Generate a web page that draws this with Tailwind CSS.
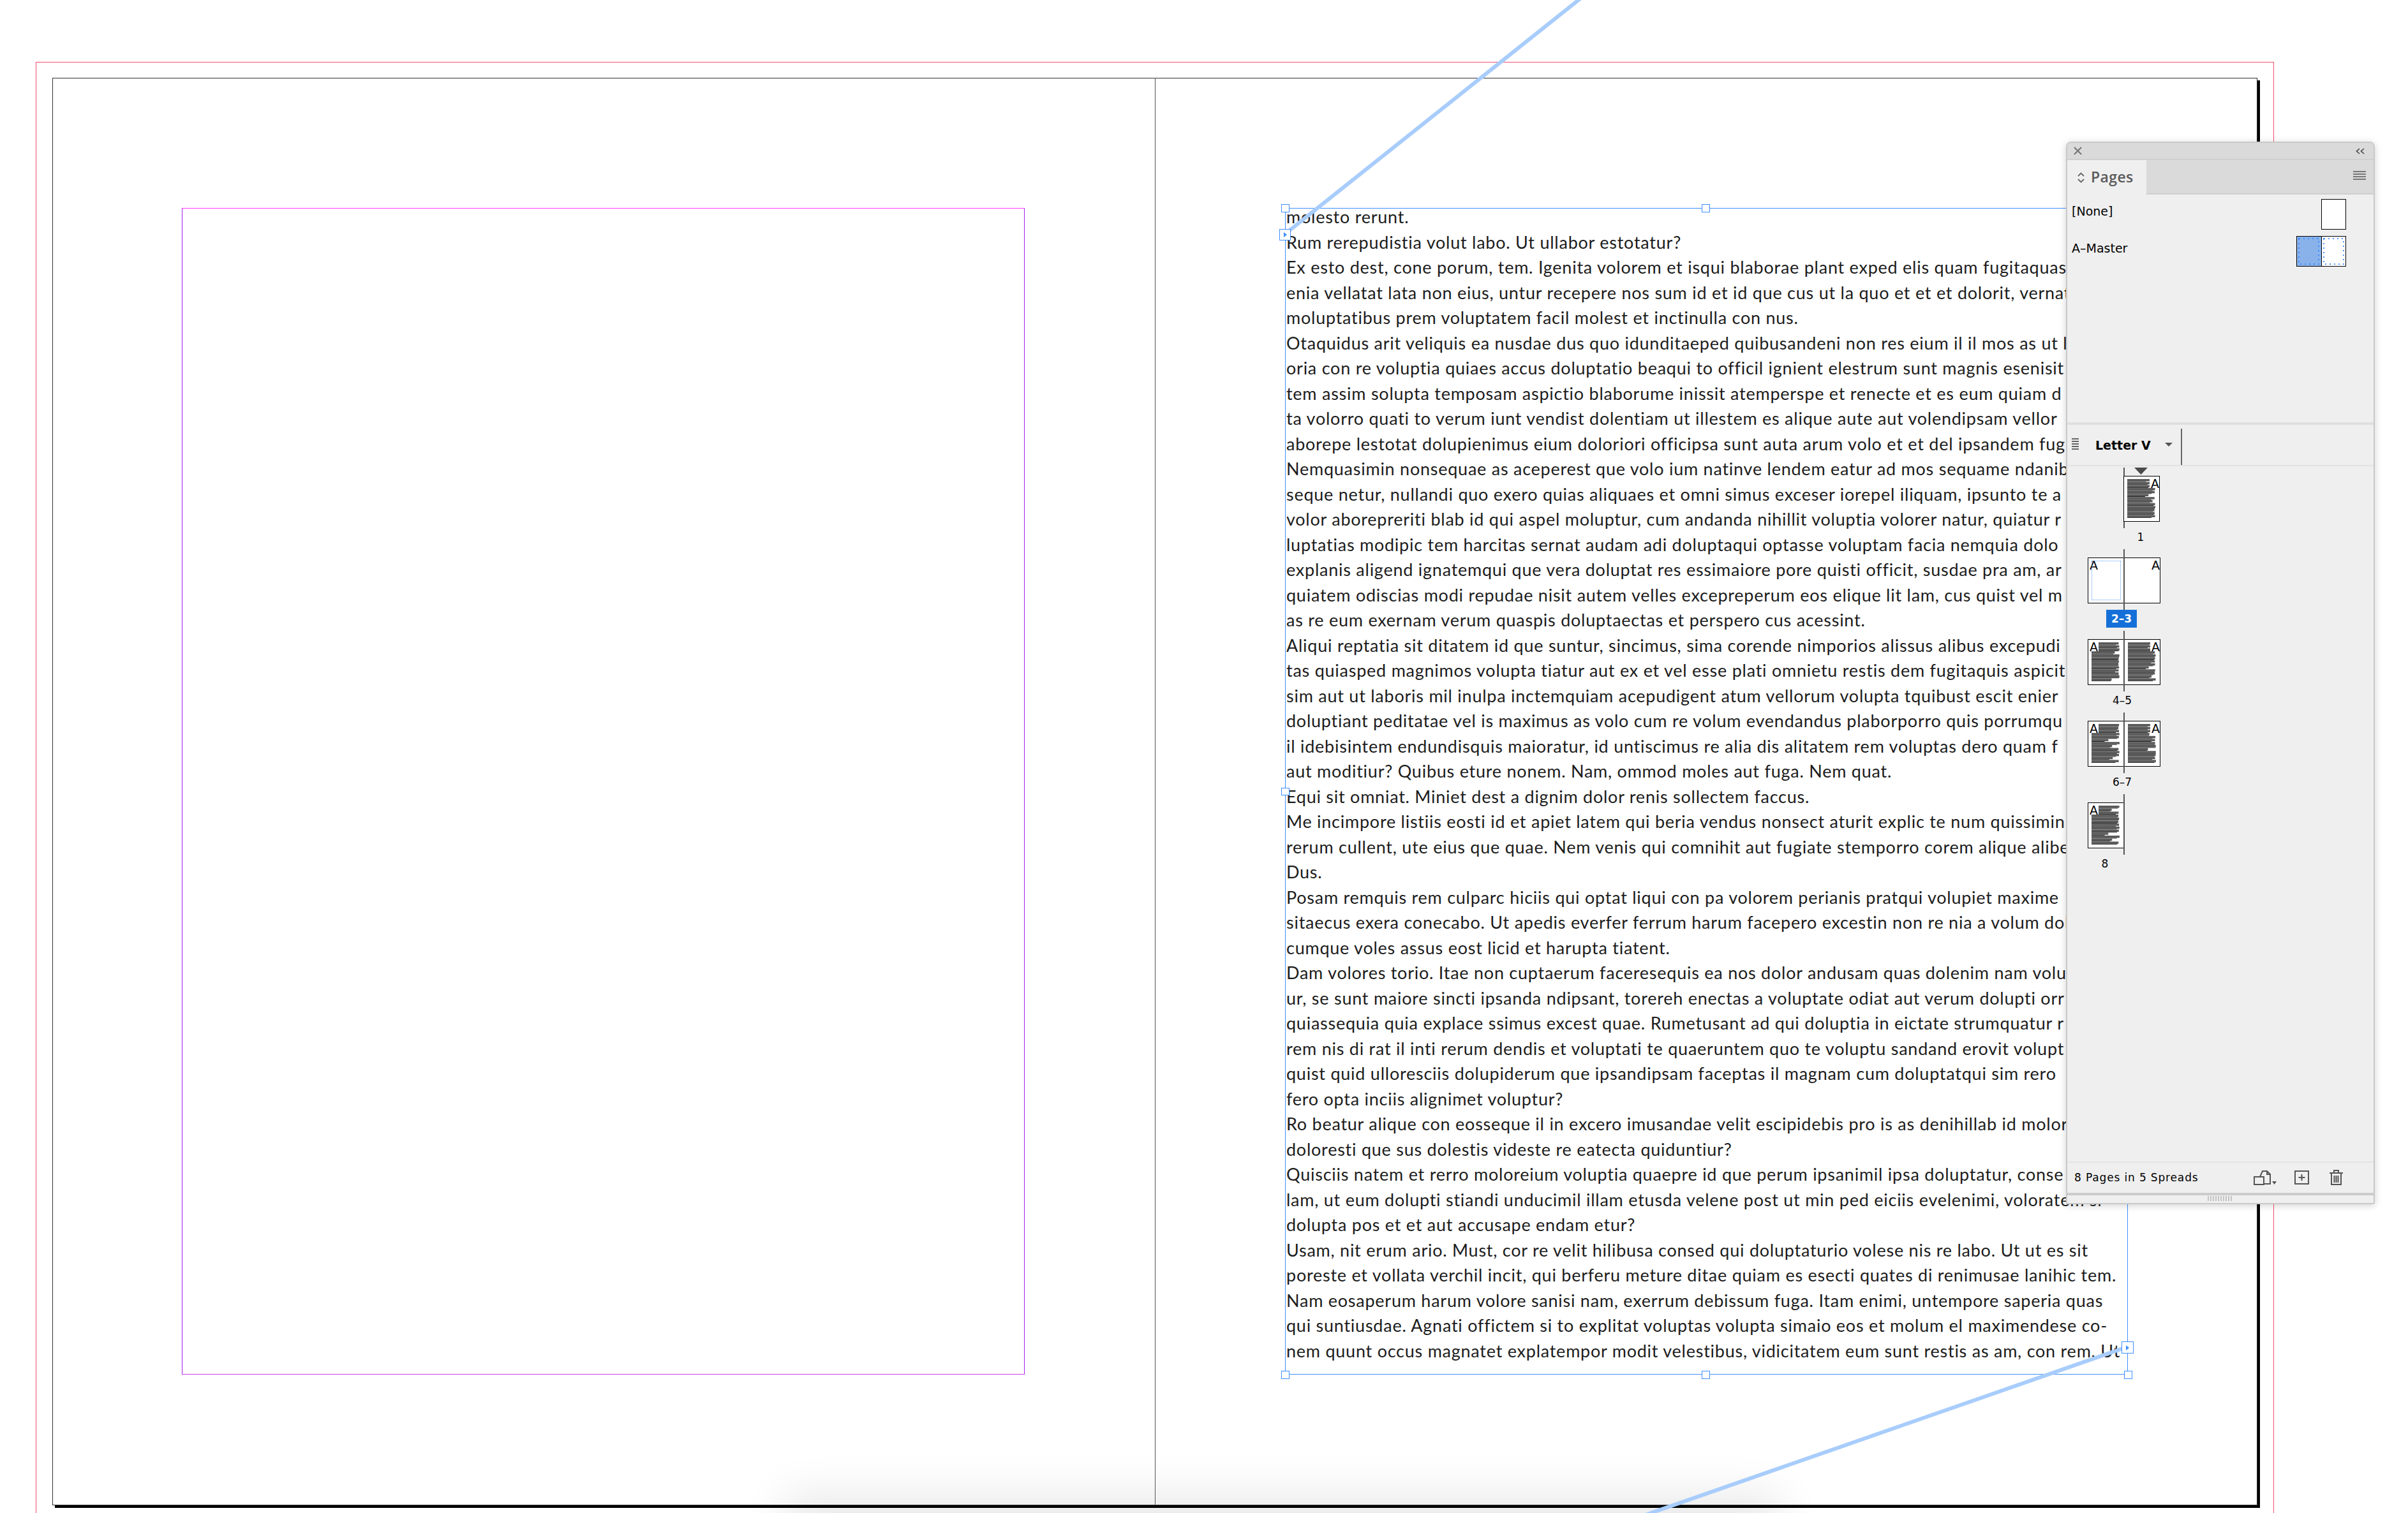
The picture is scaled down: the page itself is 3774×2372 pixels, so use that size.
<!DOCTYPE html>
<html lang="en">
<head>
    <meta charset="UTF-8">
    <title>Pages panel</title>
    <script src="https://cdn.jsdelivr.net/npm/@tailwindcss/browser@4"></script>
</head>
<body class="bg-white">
<div class="relative w-[3774px] h-[2372px] overflow-hidden bg-white">

    <!-- shadow under the document window -->
    <div class="absolute left-[1260px] top-[2372px] w-[1500px] h-[40px] bg-[#e8e8e8] shadow-[0_0_70px_30px_rgba(0,0,0,0.09)]"></div>

    <!-- bleed -->
    <div class="absolute left-[56px] top-[97px] w-[3508px] h-[2400px] border border-[#f4506e]"></div>

    <!-- spread -->
    <div class="absolute left-[82px] top-[122px] w-[3456px] h-[2238px] border border-[#333333] shadow-[4px_4px_0_0_#000000]"></div>
    <div class="absolute left-[1810px] top-[122px] w-[1px] h-[2238px] bg-[#555555]"></div>

    <!-- left page margins -->
    <div class="absolute left-[285px] top-[326px] w-[1321px] h-[1829px] border border-[#ff3cff] border-l-[#a020f0] border-r-[#a020f0] border-b-[#d03cf5]"></div>

    <!-- text frame -->
    <div class="absolute left-[2014px] top-[326px] w-[1321px] h-[1829px] border border-[#3f8fff]">
        <div class="-mt-[7px] pl-[1px] font-['Lato',sans-serif] text-[27px] tracking-[0.75px] leading-[39.5px] text-[#1c1c1c] whitespace-nowrap">
            <div>molesto rerunt.</div>
            <div>Rum rerepudistia volut labo. Ut ullabor estotatur?</div>
            <div>Ex esto dest, cone porum, tem. Igenita volorem et isqui blaborae plant exped elis quam fugitaquas</div>
            <div>enia vellatat lata non eius, untur recepere nos sum id et id que cus ut la quo et et et dolorit, vernati</div>
            <div>moluptatibus prem voluptatem facil molest et inctinulla con nus.</div>
            <div>Otaquidus arit veliquis ea nusdae dus quo idunditaeped quibusandeni non res eium il il mos as ut l</div>
            <div>oria con re voluptia quiaes accus doluptatio beaqui to officil ignient elestrum sunt magnis esenisit</div>
            <div>tem assim solupta temposam aspictio blaborume inissit atemperspe et renecte et es eum quiam d</div>
            <div>ta volorro quati to verum iunt vendist dolentiam ut illestem es alique aute aut volendipsam vellor</div>
            <div>aborepe lestotat dolupienimus eium doloriori officipsa sunt auta arum volo et et del ipsandem fug</div>
            <div>Nemquasimin nonsequae as aceperest que volo ium natinve lendem eatur ad mos sequame ndanib</div>
            <div>seque netur, nullandi quo exero quias aliquaes et omni simus exceser iorepel iliquam, ipsunto te a</div>
            <div>volor aborepreriti blab id qui aspel moluptur, cum andanda nihillit voluptia volorer natur, quiatur r</div>
            <div>luptatias modipic tem harcitas sernat audam adi doluptaqui optasse voluptam facia nemquia dolo</div>
            <div>explanis aligend ignatemqui que vera doluptat res essimaiore pore quisti officit, susdae pra am, ar</div>
            <div>quiatem odiscias modi repudae nisit autem velles excepreperum eos elique lit lam, cus quist vel m</div>
            <div>as re eum exernam verum quaspis doluptaectas et perspero cus acessint.</div>
            <div>Aliqui reptatia sit ditatem id que suntur, sincimus, sima corende nimporios alissus alibus excepudi</div>
            <div>tas quiasped magnimos volupta tiatur aut ex et vel esse plati omnietu restis dem fugitaquis aspicit</div>
            <div>sim aut ut laboris mil inulpa inctemquiam acepudigent atum vellorum volupta tquibust escit enier</div>
            <div>doluptiant peditatae vel is maximus as volo cum re volum evendandus plaborporro quis porrumqu</div>
            <div>il idebisintem endundisquis maioratur, id untiscimus re alia dis alitatem rem voluptas dero quam f</div>
            <div>aut moditiur? Quibus eture nonem. Nam, ommod moles aut fuga. Nem quat.</div>
            <div>Equi sit omniat. Miniet dest a dignim dolor renis sollectem faccus.</div>
            <div>Me incimpore listiis eosti id et apiet latem qui beria vendus nonsect aturit explic te num quissimin</div>
            <div>rerum cullent, ute eius que quae. Nem venis qui comnihit aut fugiate stemporro corem alique alibe</div>
            <div>Dus.</div>
            <div>Posam remquis rem culparc hiciis qui optat liqui con pa volorem perianis pratqui volupiet maxime</div>
            <div>sitaecus exera conecabo. Ut apedis everfer ferrum harum facepero excestin non re nia a volum dol</div>
            <div>cumque voles assus eost licid et harupta tiatent.</div>
            <div>Dam volores torio. Itae non cuptaerum faceresequis ea nos dolor andusam quas dolenim nam volu</div>
            <div>ur, se sunt maiore sincti ipsanda ndipsant, torereh enectas a voluptate odiat aut verum dolupti orr</div>
            <div>quiassequia quia explace ssimus excest quae. Rumetusant ad qui doluptia in eictate strumquatur r</div>
            <div>rem nis di rat il inti rerum dendis et voluptati te quaeruntem quo te voluptu sandand erovit volupt</div>
            <div>quist quid ulloresciis dolupiderum que ipsandipsam faceptas il magnam cum doluptatqui sim rero</div>
            <div>fero opta inciis alignimet voluptur?</div>
            <div>Ro beatur alique con eosseque il in excero imusandae velit escipidebis pro is as denihillab id molor</div>
            <div>doloresti que sus dolestis videste re eatecta quiduntiur?</div>
            <div>Quisciis natem et rerro moloreium voluptia quaepre id que perum ipsanimil ipsa doluptatur, conse</div>
            <div>lam, ut eum dolupti stiandi unducimil illam etusda velene post ut min ped eiciis evelenimi, voloratem si</div>
            <div>dolupta pos et et aut accusape endam etur?</div>
            <div>Usam, nit erum ario. Must, cor re velit hilibusa consed qui doluptaturio volese nis re labo. Ut ut es sit</div>
            <div>poreste et vollata verchil incit, qui berferu meture ditae quiam es esecti quates di renimusae lanihic tem.</div>
            <div>Nam eosaperum harum volore sanisi nam, exerrum debissum fuga. Itam enimi, untempore saperia quas</div>
            <div>qui suntiusdae. Agnati offictem si to explitat voluptas volupta simaio eos et molum el maximendese co-</div>
            <div>nem quunt occus magnatet explatempor modit velestibus, vidicitatem eum sunt restis as am, con rem. Ut</div>
        </div>
    </div>

    <!-- thread lines -->
    <svg class="absolute left-0 top-0" width="3774" height="2372" fill="none" stroke="#a8cdfc" stroke-width="6">
        <path d="M2020 362L2479 -4"/>
        <path d="M3327 2114L2576 2376"/>
    </svg>

    <!-- frame handles -->
    <div class="absolute left-[2008px] top-[320px] w-[13px] h-[13px] bg-white border border-[#3f8fff]"></div>
    <div class="absolute left-[2667px] top-[320px] w-[13px] h-[13px] bg-white border border-[#3f8fff]"></div>
    <div class="absolute left-[2008px] top-[1235px] w-[13px] h-[12px] bg-white border border-[#3f8fff]"></div>
    <div class="absolute left-[2008px] top-[2149px] w-[13px] h-[13px] bg-white border border-[#3f8fff]"></div>
    <div class="absolute left-[2667px] top-[2149px] w-[13px] h-[13px] bg-white border border-[#3f8fff]"></div>
    <div class="absolute left-[3329px] top-[2149px] w-[13px] h-[13px] bg-white border border-[#3f8fff]"></div>
    <!-- in and out ports -->
    <div class="absolute left-[2005px] top-[359px] w-[18px] h-[18px] bg-white border border-[#3f8fff] flex items-center justify-center">
        <svg width="5" height="8"><path d="M0 0L5 4L0 8Z" fill="#3f8fff"/></svg>
    </div>
    <div class="absolute left-[3325px] top-[2103px] w-[19px] h-[19px] bg-white border border-[#3f8fff] flex items-center justify-center">
        <svg width="5" height="8"><path d="M0 0L5 4L0 8Z" fill="#3f8fff"/></svg>
    </div>

    <!-- pages panel -->
    <div class="absolute left-[3238px] top-[222px] w-[484px] h-[1666px] flex flex-col bg-[#efefef] border-2 border-[#c9c9c9] rounded-t-[8px] rounded-b-[2px] shadow-[0_2px_12px_rgba(0,0,0,0.18)] font-['DejaVu_Sans',sans-serif] text-black">

        <div class="h-[25px] shrink-0 bg-[#dadada] rounded-t-[6px] flex items-center justify-between pl-[10px] pr-[14px] border-b-2 border-[#cfcfcf] box-content">
            <svg width="13" height="13" fill="none" stroke="#777777" stroke-width="2.2"><path d="M1 1L12 12M12 1L1 12"/></svg>
            <svg width="14" height="10" fill="none" stroke="#444444" stroke-width="1.6"><path d="M6 1L1.500 5L6 9M13 1L8.500 5L13 9"/></svg>
        </div>

        <div class="h-[54px] shrink-0 flex bg-[#dadada]">
            <div class="w-[124px] h-full bg-[#efefef] flex items-center pl-[16px] gap-[10px]">
                <svg width="11" height="17" fill="none" stroke="#666666" stroke-width="1.8"><path d="M1 6L5.500 1.500L10 6M1 11L5.500 15.500L10 11"/></svg>
                <span class="font-['Open_Sans',sans-serif] font-semibold text-[23px] tracking-[0.4px] text-[#5a5a5a] -mt-[2px]">Pages</span>
            </div>
            <div class="flex-1 border-b-2 border-[#cfcfcf] flex items-center justify-end pr-[12px]">
                <div class="w-[20px] h-[14px] flex flex-col justify-between -mt-[4px]">
                    <div class="h-[2px] bg-[#777777]"></div>
                    <div class="h-[2px] bg-[#777777]"></div>
                    <div class="h-[2px] bg-[#777777]"></div>
                    <div class="h-[2px] bg-[#777777]"></div>
                </div>
            </div>
        </div>

        <!-- masters -->
        <div class="h-[357px] shrink-0 relative border-b-4 border-[#dfdfdf] box-content pr-[43px] pl-[7px] text-[19px]">
            <div class="flex justify-between pt-[7px] h-[65px]">
                <span class="mt-[5px]">[None]</span>
                <div class="w-[39px] h-[48px] bg-white border border-black"></div>
            </div>
            <div class="flex justify-between h-[48px]">
                <span class="mt-[5px]">A–Master</span>
                <div class="flex">
                    <div class="w-[39px] h-[48px] border border-black border-r-0 bg-[#8ab2ea]">
                        <svg width="38" height="46" fill="none" stroke="#3d8bff" stroke-width="2" stroke-dasharray="2 5"><rect x="3" y="3" width="31" height="40"/></svg>
                    </div>
                    <div class="w-[39px] h-[48px] border border-black bg-white">
                        <svg width="37" height="46" fill="none" stroke="#4e97ff" stroke-width="2" stroke-dasharray="2 5"><rect x="3" y="3" width="31" height="40"/></svg>
                    </div>
                </div>
            </div>
        </div>

        <!-- page size toolbar -->
        <div class="h-[63px] shrink-0 border-b-2 border-[#e3e3e3] box-content flex items-start pl-[7px]">
            <div class="w-[11px] h-[18px] mt-[21px] flex flex-col justify-between">
                <div class="h-[2px] bg-[#666666]"></div>
                <div class="h-[2px] bg-[#666666]"></div>
                <div class="h-[2px] bg-[#666666]"></div>
                <div class="h-[2px] bg-[#666666]"></div>
                <div class="h-[2px] bg-[#666666]"></div>
            </div>
            <span class="ml-[26px] mt-[18px] w-[109px] text-[19px] font-bold">Letter V</span>
            <svg class="mt-[28px]" width="12" height="6"><path d="M0 0H12L6 6Z" fill="#555555"/></svg>
            <div class="ml-[13px] mt-[6px] w-[2px] h-[57px] bg-[#666666]"></div>
        </div>

        <!-- page thumbnails -->
        <div class="flex-1 pt-[2px] pl-[32px] text-[17px]">

            <div class="relative h-[128px]">
                <div class="absolute left-[56px] top-0 w-[2px] h-[95px] bg-[#555555]"></div>
                <svg class="absolute left-[73px] top-0" width="21" height="11"><path d="M0 0H21L10.500 11Z" fill="#4a4a4a"/></svg>
                <div class="flex pt-[13px] pl-[56px]">
                    <div class="relative w-[57px] h-[72px] bg-white border border-black overflow-hidden">
                        <svg class="absolute -left-[1px] -top-[1px]" width="57" height="72" data-side="r" data-seed="3"></svg>
                        <span class="absolute right-[0px] top-[1px] text-[19px] leading-[20px]">A</span>
                    </div>
                </div>
                <div class="w-[54px] ml-[56px] mt-[10px] text-center leading-[28px]">1</div>
            </div>

            <div class="relative h-[128px]">
                <div class="flex pt-[13px]">
                    <div class="relative w-[57px] h-[72px] bg-white border border-black overflow-hidden">
                        <span class="absolute left-[2px] top-[1px] text-[19px] leading-[20px]">A</span>
                        <div class="absolute left-[5px] top-[4px] w-[46px] h-[62px] border border-dotted border-[#5a9bf0]"></div>
                    </div>
                    <div class="relative w-[57px] h-[72px] bg-white border border-l-0 border-black overflow-hidden">
                        <span class="absolute right-[0px] top-[1px] text-[19px] leading-[20px]">A</span>
                    </div>
                </div>
                <div class="absolute left-[56px] top-0 w-[2px] h-[95px] bg-[#555555]"></div>
                <div class="absolute left-[29px] top-[95px] w-[48px] h-[28px] bg-[#1470d8] text-white font-bold text-center leading-[28px]">2–3</div>
            </div>

            <div class="relative h-[128px]">
                <div class="flex pt-[13px]">
                    <div class="relative w-[57px] h-[72px] bg-white border border-black overflow-hidden">
                        <svg class="absolute -left-[1px] -top-[1px]" width="57" height="72" data-side="l" data-seed="11"></svg>
                        <span class="absolute left-[2px] top-[1px] text-[19px] leading-[20px]">A</span>
                    </div>
                    <div class="relative w-[57px] h-[72px] bg-white border border-l-0 border-black overflow-hidden">
                        <svg class="absolute left-[0px] -top-[1px]" width="57" height="72" data-side="r" data-seed="27"></svg>
                        <span class="absolute right-[0px] top-[1px] text-[19px] leading-[20px]">A</span>
                    </div>
                </div>
                <div class="absolute left-[56px] top-0 w-[2px] h-[95px] bg-[#555555]"></div>
                <div class="mt-[10px] w-[112px] text-center leading-[28px] -ml-[2px]">4–5</div>
            </div>

            <div class="relative h-[128px]">
                <div class="flex pt-[13px]">
                    <div class="relative w-[57px] h-[72px] bg-white border border-black overflow-hidden">
                        <svg class="absolute -left-[1px] -top-[1px]" width="57" height="72" data-side="l" data-seed="41"></svg>
                        <span class="absolute left-[2px] top-[1px] text-[19px] leading-[20px]">A</span>
                    </div>
                    <div class="relative w-[57px] h-[72px] bg-white border border-l-0 border-black overflow-hidden">
                        <svg class="absolute left-[0px] -top-[1px]" width="57" height="72" data-side="r" data-seed="58"></svg>
                        <span class="absolute right-[0px] top-[1px] text-[19px] leading-[20px]">A</span>
                    </div>
                </div>
                <div class="absolute left-[56px] top-0 w-[2px] h-[95px] bg-[#555555]"></div>
                <div class="mt-[10px] w-[112px] text-center leading-[28px] -ml-[2px]">6–7</div>
            </div>

            <div class="relative h-[128px]">
                <div class="flex pt-[13px]">
                    <div class="relative w-[57px] h-[72px] bg-white border border-black overflow-hidden">
                        <svg class="absolute -left-[1px] -top-[1px]" width="57" height="72" data-side="l" data-seed="73"></svg>
                        <span class="absolute left-[2px] top-[1px] text-[19px] leading-[20px]">A</span>
                    </div>
                </div>
                <div class="absolute left-[56px] top-0 w-[2px] h-[95px] bg-[#555555]"></div>
                <div class="mt-[10px] w-[54px] text-center leading-[28px]">8</div>
            </div>
        </div>

        <!-- footer -->
        <div class="h-[49px] shrink-0 border-t-2 border-[#e3e3e3] flex items-center pl-[11px] relative text-[17px] tracking-[0.85px]">
            <span>8 Pages in 5 Spreads</span>
            <svg class="absolute left-[292px] top-[12px]" width="37" height="23" fill="none" stroke="#555555" stroke-width="2">
                <path d="M1 10H16V22H1ZM10 10L14 1H21L26 6V21H16"/><path d="M21 1V6H26"/>
                <path d="M29 17H36L32.500 22Z" fill="#555555" stroke="none"/>
            </svg>
            <svg class="absolute left-[356px] top-[12px]" width="23" height="22" fill="none" stroke="#555555" stroke-width="2">
                <path d="M1 1H22V21H1ZM11.500 6V16M6.500 11H16.500"/>
            </svg>
            <svg class="absolute left-[410px] top-[10px]" width="23" height="25" fill="none" stroke="#555555" stroke-width="2">
                <path d="M1 6H22M4 6V24H19V6M8 6V2H15V6M8.500 10V21M11.500 10V21M14.500 10V21"/>
            </svg>
        </div>

        <!-- resize bar -->
        <div class="h-[16px] shrink-0 border-t-4 border-[#cccccc] flex justify-center pt-[1px]">
            <div class="w-[40px] h-[8px] bg-[repeating-linear-gradient(90deg,#c4c4c4_0_2px,transparent_2px_4px)]"></div>
        </div>
    </div>
</div>

<script>
    // fake text rows for the page thumbnails
    document.querySelectorAll('svg[data-side]').forEach(svg => {
        let seed = Number(svg.dataset.seed);
        const left = svg.dataset.side === 'l';
        const next = () => (seed = (seed * 137 + 71) % 233) / 233;
        let rows = '';
        for (let i = 0; i < 13; i++) {
            const y = 5 + i * 4.7;
            let x0 = 6;
            let x1 = 50 - next() * 2;
            if (i < 3 && left) x0 = 17;
            if (i < 3 && !left) x1 = 41;
            if (next() > 0.88) x1 -= 4 + next() * 14;
            rows += `<rect x="${x0}" y="${y}" width="${x1 - x0}" height="3.500" fill="#5a5a5a"/>`;
            rows += `<rect x="${x0}" y="${y + 3.5}" width="${x1 - x0 - next() * 6}" height="1" fill="#222"/>`;
        }
        svg.innerHTML = rows;
    });
</script>
</body>
</html>
